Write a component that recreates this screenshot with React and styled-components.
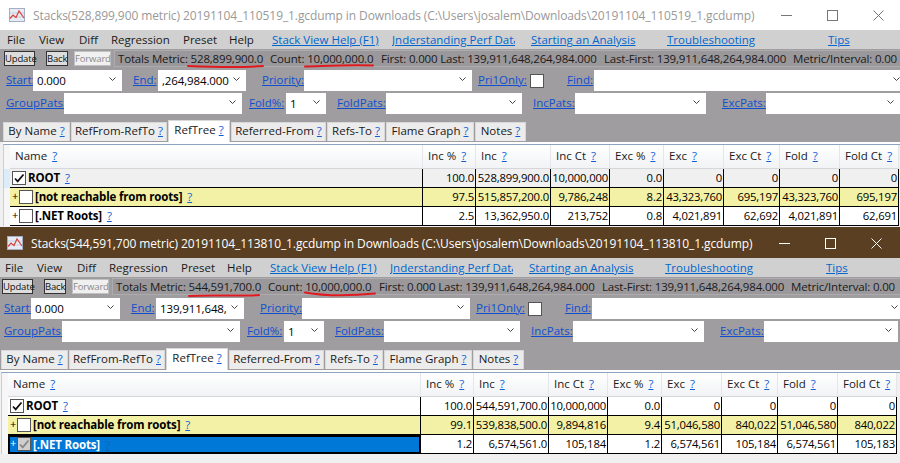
import React from "react"
import styled, { createGlobalStyle } from "styled-components"

const GlobalStyle = createGlobalStyle`
  html, body {
    margin: 0;
    padding: 0;
    background: #f0f0f0;
    overflow: hidden;
  }
  body {
    font-family: "Open Sans", "Noto Sans", sans-serif;
    font-size: 11.5px;
    color: #1a1a1a;
  }
`

const Page = styled.div`
  width: 900px;
  height: 463px;
  overflow: hidden;
`

const Window = styled.section`
  position: relative;
  width: 900px;
  height: ${props => props.$height}px;
  overflow: hidden;
  background: #f0f0f0;
`

const Inner = styled.div`
  width: 910px;
  margin-left: ${props => -props.$shift}px;
`

const TitleBar = styled.header`
  height: ${props => (props.$dark ? 31 : 30)}px;
  box-sizing: border-box;
  padding-top: ${props => (props.$dark ? 1 : 0)}px;
  display: flex;
  align-items: center;
  padding-left: 9px;
  background: ${props => (props.$dark ? "#5a3f22" : "#ffffff")};
  color: ${props => (props.$dark ? "#ffffff" : "#999999")};
`

const TitleText = styled.span`
  margin-left: 8px;
  width: 730px;
  white-space: nowrap;
  font-size: 12px;
  letter-spacing: -0.09px;
`

const WindowButton = styled.span`
  width: 46px;
  height: 30px;
  display: flex;
  align-items: center;
  justify-content: center;
`

const MenuBar = styled.nav`
  height: 19px;
  display: flex;
  align-items: center;
  padding-left: 7px;
  background: #d0d0d0;
`

const MenuItem = styled.span`
  width: ${props => props.$w}px;
  flex: none;
  white-space: nowrap;
`

const HelpLink = styled.a`
  display: block;
  width: ${props => (props.$clip ? `${props.$clip}px` : "auto")};
  overflow: hidden;
  white-space: nowrap;
  color: #0066cc;
  text-decoration: underline;
`

const GrayPanel = styled.div`
  height: 71px;
  background: #9f9d9f;
  padding-top: 2px;
  box-sizing: border-box;
`

const StatusRow = styled.div`
  height: 15px;
  display: flex;
  align-items: center;
  padding-left: 4px;
`

const SmallButton = styled.button`
  width: ${props => props.$w}px;
  height: 15px;
  margin-right: ${props => props.$gap}px;
  padding: 0;
  box-sizing: border-box;
  border: 1px solid ${props => (props.disabled ? "#c0c0c0" : "#333333")};
  background: ${props => (props.disabled ? "#f0f0f0" : "#dddddd")};
  color: ${props => (props.disabled ? "#8a8a8a" : "#111111")};
  font-family: inherit;
  font-size: 9.5px;
  line-height: 12px;
  letter-spacing: -0.15px;
`

const StatusPanel = styled.div`
  flex: none;
  display: flex;
  align-items: center;
  box-sizing: border-box;
  height: 17px;
  margin-left: -3px;
  padding-left: 3px;
  border: 1px solid #adabad;
  background: #9a989a;
`

const StatusItem = styled.span`
  flex: none;
  width: ${props => props.$w}px;
  white-space: nowrap;
  letter-spacing: -0.17px;
`

const FilterRow = styled.div`
  height: 21px;
  display: flex;
  align-items: center;
  margin-top: ${props => props.$top}px;
  padding-left: 6px;
`

const FilterLink = styled.a`
  flex: none;
  width: ${props => props.$w}px;
  margin-left: ${props => props.$gap || 0}px;
  margin-bottom: 2px;
  color: #0f4fd0;
  text-decoration: underline;
  white-space: nowrap;
`

const Combo = styled.div`
  flex: none;
  box-sizing: border-box;
  width: ${props => props.$w}px;
  height: 21px;
  display: flex;
  align-items: center;
  justify-content: space-between;
  padding: 0 5px 0 4px;
  background: #ffffff;
  color: #000000;
  font-size: 11.5px;
  letter-spacing: -0.12px;
  white-space: nowrap;
  overflow: hidden;
`

const ComboValue = styled.span`
  flex: 1;
  overflow: hidden;
`

const Chevron = styled.svg`
  flex: none;
  width: 7px;
  height: 4px;
  margin-right: 1px;
  margin-bottom: 3px;
`

const EmptyBox = styled.span`
  flex: none;
  box-sizing: border-box;
  width: 14px;
  height: 14px;
  margin-left: ${props => props.$gap || 0}px;
  margin-right: ${props => props.$after || 0}px;
  border: 1px solid #555555;
  background: ${props => (props.$disabled ? "#cfcfcf" : "#ffffff")};
  display: inline-flex;
  align-items: center;
  justify-content: center;
`

const TabStrip = styled.div`
  height: 22px;
  display: flex;
  align-items: flex-end;
  padding-left: 3px;
  background: #9f9d9f;
`

const Tab = styled.span`
  box-sizing: border-box;
  flex: none;
  width: ${props => props.$w}px;
  height: ${props => (props.$active ? 22 : 19)}px;
  margin-right: 1px;
  margin-bottom: ${props => (props.$active ? 0 : 1)}px;
  padding-top: ${props => (props.$active ? 1 : 0)}px;
  text-align: center;
  white-space: nowrap;
  background: ${props => (props.$active ? "#ffffff" : "#ececec")};
  border: 1px solid #d8d8d8;
  border-bottom: none;
`

const Hint = styled.a`
  color: ${props => (props.$muted ? "#0a64b8" : "#0f5fd8")};
  text-decoration: underline;
  margin-left: ${props => (props.$tight ? 0 : 5)}px;
  font-weight: 400;
`

const TabBody = styled.div`
  margin-left: 3px;
  padding-top: 2px;
  background: #ffffff;
`

const Grid = styled.div`
  background: #f0f0f0;
  border-top: 1px solid #8ea3bf;
  border-left: 1px solid #c4d0e0;
`

const GridRow = styled.div`
  display: grid;
  grid-template-columns: 6px 413px 53px 75px 59px 54px 60px 56px 60px 59px;
  height: ${props => (props.$header ? 24 : 19)}px;
  box-sizing: border-box;
`

const Gutter = styled.span`
  background: ${props => (props.$active ? "#dcecf8" : "#f6f6f6")};
`

const HeaderCell = styled.span`
  display: flex;
  align-items: center;
  padding-left: 5px;
  padding-bottom: 2px;
  box-sizing: border-box;
  background: linear-gradient(#ffffff, #f2f3f5);
  border-right: 1px solid #e4e6ea;
  border-bottom: 1px solid #d5d7da;
  white-space: nowrap;
  overflow: hidden;
`

const Cell = styled.span`
  display: flex;
  align-items: center;
  justify-content: ${props => (props.$name ? "flex-start" : "flex-end")};
  box-sizing: border-box;
  padding: 0 1px 1px 0;
  background: ${props => props.$bg};
  color: #000000;
  font-size: 11.3px;
  letter-spacing: -0.17px;
  white-space: nowrap;
  overflow: hidden;
  border-right: 1px solid #000000;
  border-bottom: 1px solid #000000;
`

const NameCell = styled(Cell)`
  padding-left: 2px;
  font-weight: 700;
  font-size: 11.5px;
  letter-spacing: -0.16px;
  color: ${props => (props.$selected ? "#ffffff" : "#000000")};
  ${props => props.$selected && "border: 2px solid #000000; padding-left: 0;"}
`

const Expander = styled.span`
  width: 7px;
  margin-top: -3px;
  font-weight: 400;
  font-size: 11px;
`

const Checkbox = styled(EmptyBox)`
  margin-right: 2px;
`

const Scribble = styled.svg`
  position: absolute;
  left: 0;
  top: 0;
  width: 900px;
  height: 100px;
  pointer-events: none;
`

const columns = ["Inc %", "Inc", "Inc Ct", "Exc %", "Exc", "Exc Ct", "Fold", "Fold Ct"]
const tabs = [
  ["By Name", 67],
  ["RefFrom-RefTo", 96],
  ["RefTree", 62, true],
  ["Referred-From", 95],
  ["Refs-To", 58],
  ["Flame Graph", 88],
  ["Notes", 51],
]

const windows = [
  {
    shift: 0,
    height: 227,
    dark: false,
    rootBg: "#f0f0f0",
    title:
      "Stacks(528,899,900 metric) 20191104_110519_1.gcdump in Downloads (C:\\Users\\josalem\\Downloads\\20191104_110519_1.gcdump)",
    metric: "528,899,900.0",
    endValue: ",264,984.000",
    rows: [
      ["100.0", "528,899,900.0", "10,000,000", "0.0", "0", "0", "0", "0"],
      ["97.5", "515,857,200.0", "9,786,248", "8.2", "43,323,760", "695,197", "43,323,760", "695,197"],
      ["2.5", "13,362,950.0", "213,752", "0.8", "4,021,891", "62,692", "4,021,891", "62,691"],
    ],
    marks: ["M188 66 C210 67 240 68 263 66", "M305 66.5 C325 66 350 64.5 373 65.5"],
  },
  {
    shift: 2,
    height: 236,
    dark: true,
    rootBg: "#ffffff",
    selected: true,
    title:
      "Stacks(544,591,700 metric) 20191104_113810_1.gcdump in Downloads (C:\\Users\\josalem\\Downloads\\20191104_113810_1.gcdump)",
    metric: "544,591,700.0",
    endValue: "139,911,648,",
    rows: [
      ["100.0", "544,591,700.0", "10,000,000", "0.0", "0", "0", "0", "0"],
      ["99.1", "539,838,500.0", "9,894,816", "9.4", "51,046,580", "840,022", "51,046,580", "840,022"],
      ["1.2", "6,574,561.0", "105,184", "1.2", "6,574,561", "105,184", "6,574,561", "105,183"],
    ],
    marks: ["M189 69 C210 67.5 240 69.5 259 68", "M305 65.5 C325 69 350 69 375 66.5"],
  },
]

function ChevronDown() {
  return (
    <Chevron viewBox="0 0 7 4">
      <polyline points="0.5,0.5 3.5,3.5 6.5,0.5" fill="none" stroke="#444" strokeWidth="1" />
    </Chevron>
  )
}

function ChartIcon() {
  return (
    <svg width="16" height="14" viewBox="0 0 16 14">
      <rect x="0.5" y="0.5" width="15" height="13" fill="#e6ebf4" stroke="#a3adc4" />
      <path d="M1 5H15M1 9H15" stroke="#c7d0e2" />
      <path d="M1 10.5 L4 7 L7 9.5 L10 3 L15 10" fill="none" stroke="#d8453e" strokeWidth="1.2" />
    </svg>
  )
}

function WindowControls({ dark }) {
  const stroke = dark ? "#ffffff" : "#777777"
  return (
    <>
      <WindowButton>
        <svg width="11" height="11" viewBox="0 0 11 11">
          <path d="M0 5.5H11" stroke={stroke} />
        </svg>
      </WindowButton>
      <WindowButton>
        <svg width="11" height="11" viewBox="0 0 11 11">
          <rect x="0.5" y="0.5" width="10" height="10" fill="none" stroke={stroke} />
        </svg>
      </WindowButton>
      <WindowButton>
        <svg width="11" height="11" viewBox="0 0 11 11">
          <path d="M0.5 0.5L10.5 10.5M10.5 0.5L0.5 10.5" stroke={stroke} />
        </svg>
      </WindowButton>
    </>
  )
}

function Check({ color }) {
  return (
    <svg width="12" height="12" viewBox="0 0 12 12">
      <path d="M2 6.5L4.7 9.3L10.5 2.5" fill="none" stroke={color} strokeWidth="1.8" />
    </svg>
  )
}

function Stacks({ win }) {
  return (
    <Window $height={win.height}>
      <Inner $shift={win.shift}>
        <TitleBar $dark={win.dark}>
          <ChartIcon />
          <TitleText>{win.title}</TitleText>
          <WindowControls dark={win.dark} />
        </TitleBar>
        <MenuBar>
          <MenuItem $w={32}>File</MenuItem>
          <MenuItem $w={40}>View</MenuItem>
          <MenuItem $w={32}>Diff</MenuItem>
          <MenuItem $w={72}>Regression</MenuItem>
          <MenuItem $w={46}>Preset</MenuItem>
          <MenuItem $w={43}>Help</MenuItem>
          <MenuItem $w={120}><HelpLink>Stack View Help (F1)</HelpLink></MenuItem>
          <MenuItem $w={139}><HelpLink $clip={123}>Jnderstanding Perf Data</HelpLink></MenuItem>
          <MenuItem $w={136}><HelpLink>Starting an Analysis</HelpLink></MenuItem>
          <MenuItem $w={161}><HelpLink>Troubleshooting</HelpLink></MenuItem>
          <MenuItem $w={40}><HelpLink>Tips</HelpLink></MenuItem>
        </MenuBar>
        <GrayPanel>
          <StatusRow>
            <SmallButton $w={31} $gap={11}>Update</SmallButton>
            <SmallButton $w={22} $gap={6}>Back</SmallButton>
            <SmallButton $w={37} $gap={6} disabled>Forward</SmallButton>
            <StatusPanel>
              <StatusItem $w={152}>Totals Metric: {win.metric}</StatusItem>
              <StatusItem $w={111}>Count: 10,000,000.0</StatusItem>
              <StatusItem $w={223}>First: 0.000 Last: 139,911,648,264,984.000</StatusItem>
              <StatusItem $w={189}>Last-First: 139,911,648,264,984.000</StatusItem>
              <StatusItem $w={118}>Metric/Interval: 0.00</StatusItem>
            </StatusPanel>
          </StatusRow>
          <FilterRow $top={4}>
            <FilterLink $w={27}>Start:</FilterLink>
            <Combo $w={89}><ComboValue>0.000</ComboValue><ChevronDown /></Combo>
            <FilterLink $w={25} $gap={11}>End:</FilterLink>
            <Combo $w={88}><ComboValue>{win.endValue}</ComboValue><ChevronDown /></Combo>
            <FilterLink $w={42} $gap={16}>Priority:</FilterLink>
            <Combo $w={168}><ComboValue /><ChevronDown /></Combo>
            <FilterLink $w={52} $gap={6}>Pri1Only:</FilterLink>
            <EmptyBox $after={23} />
            <FilterLink $w={27}>Find:</FilterLink>
            <Combo $w={312}><ComboValue /><ChevronDown /></Combo>
          </FilterRow>
          <FilterRow $top={2}>
            <FilterLink $w={58}>GroupPats:</FilterLink>
            <Combo $w={178}><ComboValue /><ChevronDown /></Combo>
            <FilterLink $w={37} $gap={7}>Fold%:</FilterLink>
            <Combo $w={40}><ComboValue>1</ComboValue><ChevronDown /></Combo>
            <FilterLink $w={49} $gap={11}>FoldPats:</FilterLink>
            <Combo $w={136}><ComboValue /><ChevronDown /></Combo>
            <FilterLink $w={42} $gap={11}>IncPats:</FilterLink>
            <Combo $w={131}><ComboValue /><ChevronDown /></Combo>
            <FilterLink $w={44} $gap={16}>ExcPats:</FilterLink>
            <Combo $w={134}><ComboValue /><ChevronDown /></Combo>
          </FilterRow>
        </GrayPanel>
        <TabStrip>
          {tabs.map(([label, w, active]) => (
            <Tab key={label} $w={w} $active={active}>
              {label} <Hint $tight>?</Hint>
            </Tab>
          ))}
        </TabStrip>
        <TabBody>
          <Grid>
            <GridRow $header>
              <Gutter />
              <HeaderCell>Name <Hint>?</Hint></HeaderCell>
              {columns.map(c => (
                <HeaderCell key={c}>{c} <Hint>?</Hint></HeaderCell>
              ))}
            </GridRow>
            <GridRow>
              <Gutter $active={!win.dark} />
              <NameCell $name $bg={win.rootBg}>
                <Checkbox><Check color="#111" /></Checkbox>ROOT <Hint>?</Hint>
              </NameCell>
              {win.rows[0].map((v, i) => <Cell key={i} $bg={win.rootBg}>{v}</Cell>)}
            </GridRow>
            <GridRow>
              <Gutter />
              <NameCell $name $bg="#f3f1a5">
                <Expander>+</Expander><Checkbox />[not reachable from roots] <Hint>?</Hint>
              </NameCell>
              {win.rows[1].map((v, i) => <Cell key={i} $bg="#f3f1a5">{v}</Cell>)}
            </GridRow>
            <GridRow>
              <Gutter />
              <NameCell $name $selected={win.selected} $bg={win.selected ? "#0078d7" : "#ffffff"}>
                <Expander>+</Expander>
                {win.selected ? (
                  <Checkbox $disabled><Check color="#888" /></Checkbox>
                ) : (
                  <Checkbox />
                )}
                [.NET Roots] <Hint $muted={win.selected}>?</Hint>
              </NameCell>
              {win.rows[2].map((v, i) => <Cell key={i} $bg="#ffffff">{v}</Cell>)}
            </GridRow>
          </Grid>
        </TabBody>
      </Inner>
      <Scribble viewBox="0 0 900 100">
        {win.marks.map(d => (
          <path key={d} d={d} fill="none" stroke="#e01a1f" strokeWidth="2" strokeLinecap="round" />
        ))}
      </Scribble>
    </Window>
  )
}

export default function App() {
  return (
    <Page>
      <GlobalStyle />
      {windows.map(win => (
        <Stacks key={win.metric} win={win} />
      ))}
    </Page>
  )
}
